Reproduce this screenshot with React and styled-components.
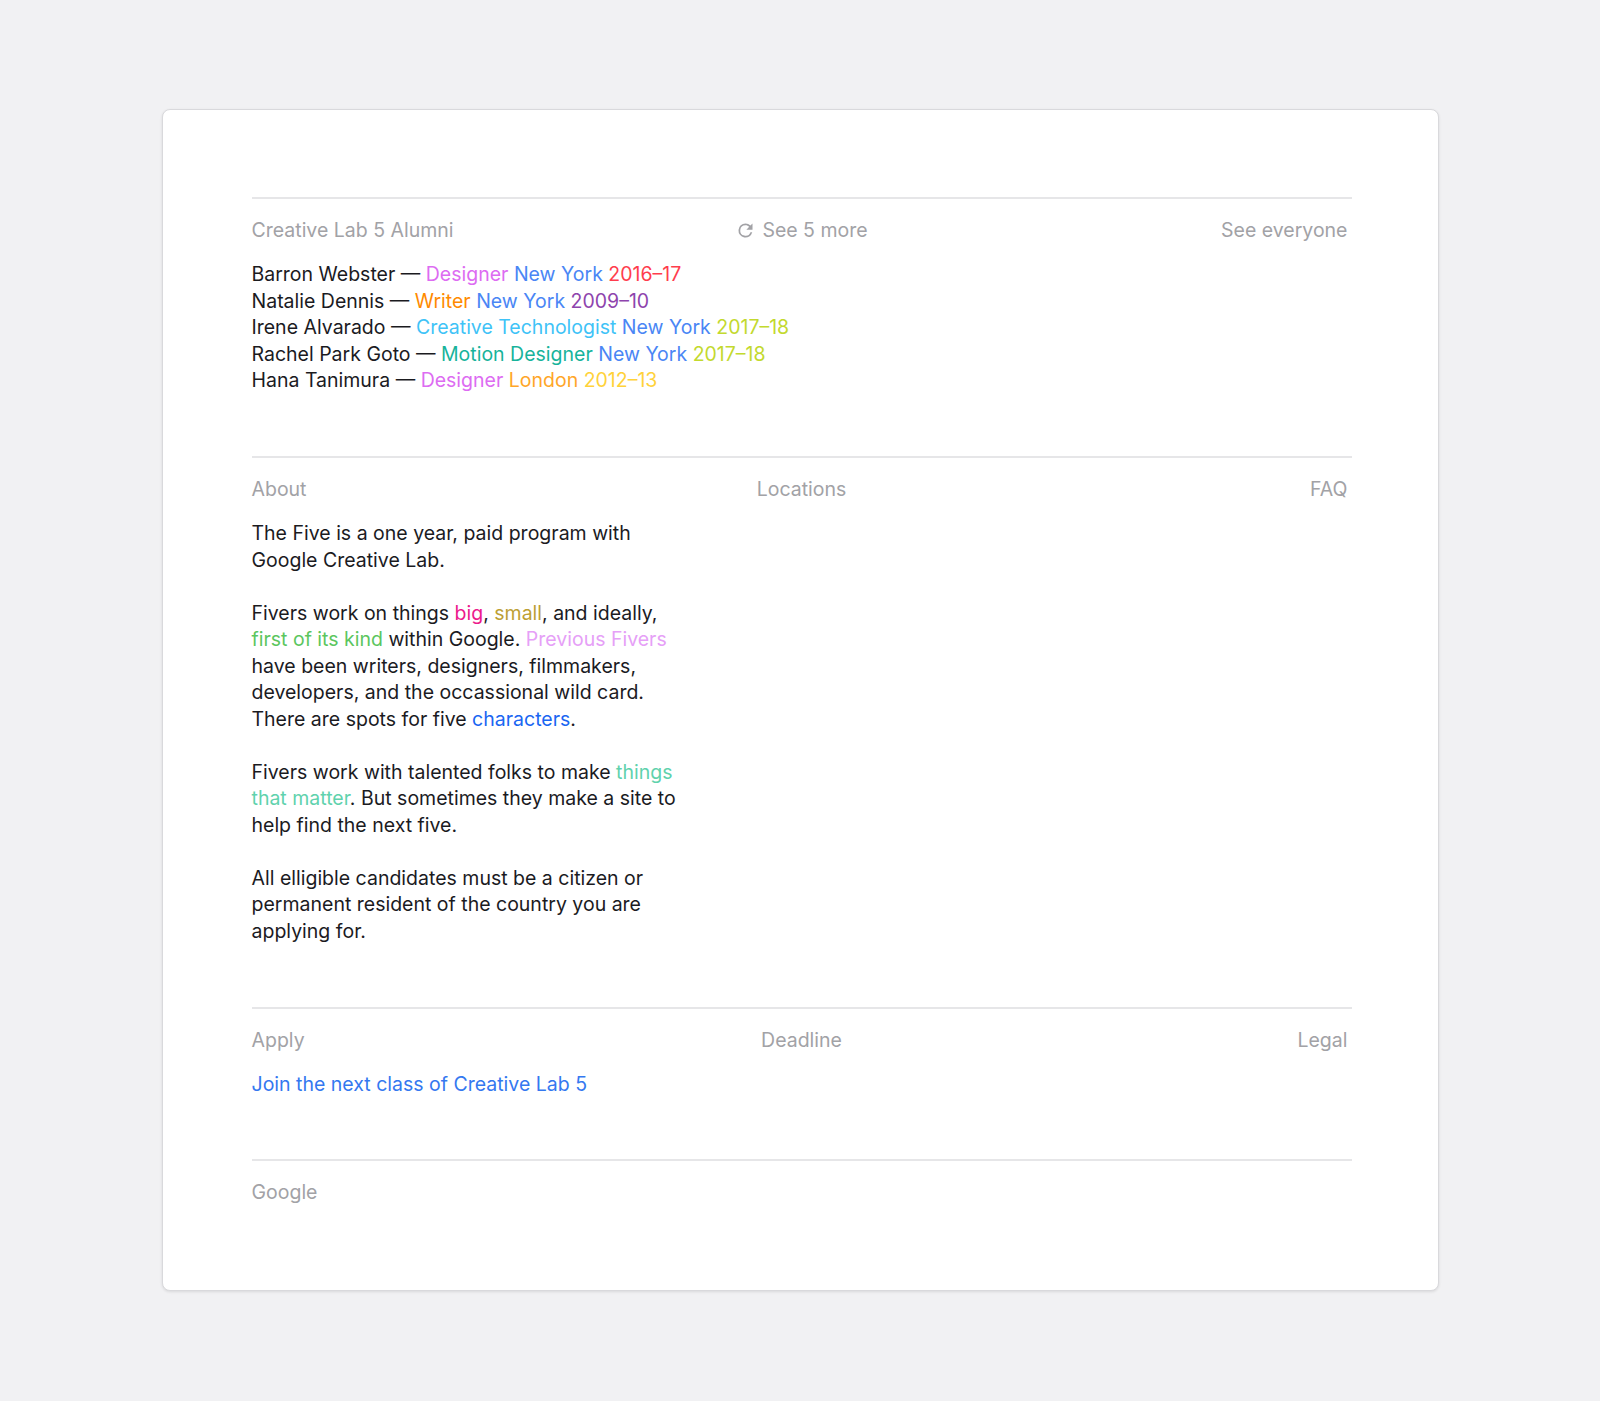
import React from 'react';
import styled, { createGlobalStyle } from 'styled-components';

const GlobalStyle = createGlobalStyle`
  html, body {
    margin: 0;
    padding: 0;
    background: #f1f1f3;
  }
  body {
    font-family: Inter, "Open Sans", Roboto, sans-serif;
    -webkit-font-smoothing: antialiased;
  }
`;

const Page = styled.div`
  min-height: 1401px;
  padding: 109px 0 110px;
  box-sizing: border-box;
`;

const Card = styled.main`
  width: 1277px;
  margin: 0 auto;
  box-sizing: border-box;
  background: #fff;
  border: 1px solid #d9d9dc;
  border-radius: 8px;
  box-shadow: 0 1px 3px rgba(0, 0, 0, 0.1);
  padding: 87px 86px 85px 89px;
`;

const Section = styled.section`
  border-top: 2px solid #e6e6e8;
  padding: 18px 0 ${props => props.bottom || '62.5px'};
`;

const HeadRow = styled.div`
  display: grid;
  grid-template-columns: 1fr auto 1fr;
  align-items: center;
  font-size: 19.5px;
  line-height: 26px;
  color: #a2a2a6;
  margin-bottom: ${props => props.last ? '0' : '18px'};
`;

const HeadItem = styled.span`
  justify-self: ${props => props.align || 'start'};
  display: inline-flex;
  align-items: center;
  gap: 6px;
  padding-right: ${props => (props.align === 'end' ? '4px' : '0')};
`;

const Body = styled.div`
  font-size: 19.5px;
  line-height: 26.5px;
  color: #1b1b1f;
  white-space: nowrap;
`;

const Line = styled.div``;

const Para = styled.p`
  margin: 0 0 26.5px;
  &:last-child {
    margin-bottom: 0;
  }
`;

const C = styled.span`
  color: ${props => props.c};
`;

const Link = styled.a`
  color: #3478f0;
  text-decoration: none;
  font-size: 19.5px;
  line-height: 26.5px;
`;

const RefreshIcon = () => (
  <svg width="21" height="21" viewBox="0 0 24 24" fill="#a2a2a6" aria-hidden="true">
    <path d="M17.65 6.35A7.96 7.96 0 0 0 12 4a8 8 0 1 0 7.73 10h-2.08A6 6 0 1 1 12 6c1.66 0 3.14.69 4.22 1.78L13 11h7V4l-2.350 2.35z" />
  </svg>
);

const alumni = [
  { name: 'Barron Webster', role: ['Designer', '#dd6cf2'], city: ['New York', '#4a86f5'], year: ['2016–17', '#ff3d4d'] },
  { name: 'Natalie Dennis', role: ['Writer', '#ff8a00'], city: ['New York', '#4a86f5'], year: ['2009–10', '#8e44ad'] },
  { name: 'Irene Alvarado', role: ['Creative Technologist', '#3fc3f7'], city: ['New York', '#4a86f5'], year: ['2017–18', '#c3d92e'] },
  { name: 'Rachel Park Goto', role: ['Motion Designer', '#17b39b'], city: ['New York', '#4a86f5'], year: ['2017–18', '#c3d92e'] },
  { name: 'Hana Tanimura', role: ['Designer', '#dd6cf2'], city: ['London', '#ffa628'], year: ['2012–13', '#ffd23a'] },
];

export default function App() {
  return (
    <Page>
      <GlobalStyle />
      <Card>
        <Section>
          <HeadRow>
            <HeadItem>Creative Lab 5 Alumni</HeadItem>
            <HeadItem align="center"><RefreshIcon />See 5 more</HeadItem>
            <HeadItem align="end">See everyone</HeadItem>
          </HeadRow>
          <Body>
            {alumni.map(a => (
              <Line key={a.name}>
                {a.name} — <C c={a.role[1]}>{a.role[0]}</C> <C c={a.city[1]}>{a.city[0]}</C>{' '}
                <C c={a.year[1]}>{a.year[0]}</C>
              </Line>
            ))}
          </Body>
        </Section>

        <Section>
          <HeadRow>
            <HeadItem>About</HeadItem>
            <HeadItem align="center">Locations</HeadItem>
            <HeadItem align="end">FAQ</HeadItem>
          </HeadRow>
          <Body>
            <Para>
              The Five is a one year, paid program with<br />
              Google Creative Lab.
            </Para>
            <Para>
              Fivers work on things <C c="#ec1a8c">big</C>, <C c="#bda034">small</C>, and ideally,<br />
              <C c="#5bc65e">first of its kind</C> within Google. <C c="#e6a0f7">Previous Fivers</C><br />
              have been writers, designers, filmmakers,<br />
              developers, and the occassional wild card.<br />
              There are spots for five <C c="#1a66f2">characters</C>.
            </Para>
            <Para>
              Fivers work with talented folks to make <C c="#5fd2ad">things</C><br />
              <C c="#5fd2ad">that matter</C>. But sometimes they make a site to<br />
              help find the next five.
            </Para>
            <Para>
              All elligible candidates must be a citizen or<br />
              permanent resident of the country you are<br />
              applying for.
            </Para>
          </Body>
        </Section>

        <Section bottom="61.5px">
          <HeadRow>
            <HeadItem>Apply</HeadItem>
            <HeadItem align="center">Deadline</HeadItem>
            <HeadItem align="end">Legal</HeadItem>
          </HeadRow>
          <Link href="#">Join the next class of Creative Lab 5</Link>
        </Section>

        <Section bottom="0">
          <HeadRow last>
            <HeadItem>Google</HeadItem>
          </HeadRow>
        </Section>
      </Card>
    </Page>
  );
}
